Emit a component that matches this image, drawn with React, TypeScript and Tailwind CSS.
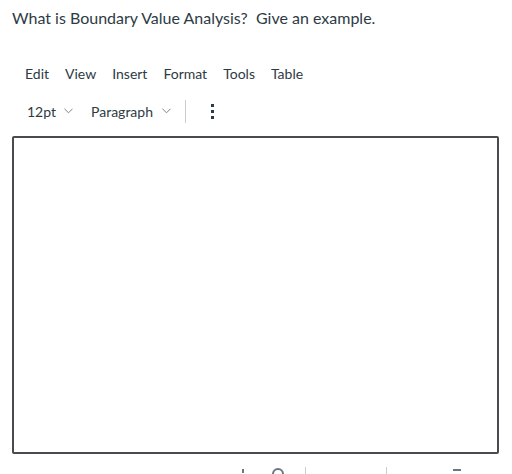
const menus = ["Edit", "View", "Insert", "Format", "Tools", "Table"];

const Chevron = ({ className = "" }: { className?: string }) => (
  <svg viewBox="0 0 10 6" className={className} fill="none">
    <path d="M0.5 0.5 5 5 9.5 0.5" stroke="#6b7780" strokeWidth="1" />
  </svg>
);

const App = () => {
  return (
    <div
      className="w-[512px] h-[474px] overflow-hidden bg-white text-[#2d3b45]"
      style={{ fontFamily: "Lato, 'Noto Sans', sans-serif" }}
    >
      <div className="pl-3 pt-[8px] text-[16px] leading-5 whitespace-pre">
        What is Boundary Value Analysis?  Give an example.
      </div>

      {/* menu bar */}
      <div className="flex items-center gap-[16px] pl-[25px] mt-[36px] text-[14px] leading-5">
        {menus.map((m) => (
          <span key={m}>{m}</span>
        ))}
      </div>

      {/* toolbar */}
      <div className="flex items-center pl-[27px] mt-[15px] h-6 text-[14px]">
        <span>12pt</span>
        <Chevron className="ml-[8px] w-[9px] h-[6px]" />
        <span className="ml-[18px]">Paragraph</span>
        <Chevron className="ml-[9px] w-[9px] h-[6px]" />
        <div className="ml-[14px] w-px h-[23px] bg-[#c7cdd1]" />
        <div className="ml-[25px] flex flex-col gap-[3px]">
          <span className="w-[3px] h-[3px] bg-[#2d3b45]" />
          <span className="w-[3px] h-[3px] bg-[#2d3b45]" />
          <span className="w-[3px] h-[3px] bg-[#2d3b45]" />
        </div>
      </div>

      {/* editor area */}
      <div className="ml-3 mt-[13px] w-[487px] h-[318px] border-2 border-[#4a4a4f] rounded-[2px]" />

      {/* status bar, cut off */}
      <div className="relative h-6">
        <span className="absolute left-[242px] top-[15px] w-[2px] h-[4px] bg-[#6b7780]" />
        <span className="absolute left-[272px] top-[14px] w-[12px] h-[12px] rounded-full border-2 border-[#6b7780]" />
        <span className="absolute left-[305px] top-[13px] w-px h-4 bg-[#c7cdd1]" />
        <span className="absolute left-[386px] top-[13px] w-px h-4 bg-[#c7cdd1]" />
        <span className="absolute left-[453px] top-[15px] w-[8px] h-[2px] bg-[#6b7780]" />
      </div>
    </div>
  );
};

export default App;
